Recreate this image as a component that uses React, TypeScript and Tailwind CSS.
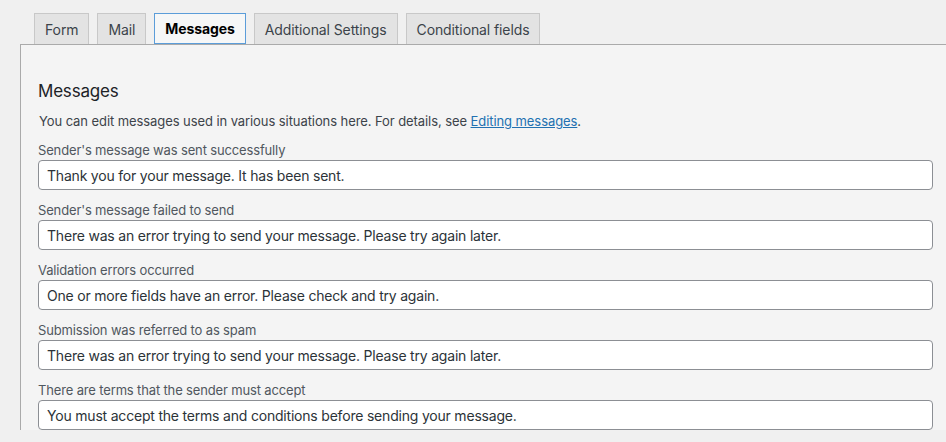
import React from "react";

const tabs = ["Form", "Mail", "Messages", "Additional Settings", "Conditional fields"];

const fields = [
  ["Sender's message was sent successfully", "Thank you for your message. It has been sent."],
  ["Sender's message failed to send", "There was an error trying to send your message. Please try again later."],
  ["Validation errors occurred", "One or more fields have an error. Please check and try again."],
  ["Submission was referred to as spam", "There was an error trying to send your message. Please try again later."],
  ["There are terms that the sender must accept", "You must accept the terms and conditions before sending your message."],
];

export default function App() {
  return (
    <div className="relative h-[442px] w-[946px] overflow-hidden bg-[#f0f0f0] font-['Inter','Liberation_Sans',sans-serif]">
      <div className="flex gap-[8px] pl-[34px] pt-[13px]">
        {tabs.map((t) =>
          t === "Messages" ? (
            <div
              key={t}
              className="flex h-[31px] items-center border border-[#5b9dd9] bg-[#f6f7f7] px-[10px] text-[14px] font-bold tracking-[-0.1px] text-black"
            >
              {t}
            </div>
          ) : (
            <div
              key={t}
              className="flex h-[31px] items-center border border-b-0 border-[#c8c8c8] bg-[#e3e3e3] px-[10px] text-[14px] tracking-[-0.1px] text-[#3c434a]"
            >
              {t}
            </div>
          )
        )}
      </div>
      <div className="ml-[20px] w-[960px] border-l border-t border-[#aaaaaa] bg-[#f4f4f4] pl-[17px] pt-[34px]">
        <h2 className="text-[17px] leading-[24px] tracking-[-0.2px] text-[#1d2327]">Messages</h2>
        <p className="mt-[9px] pl-[1px] text-[13px] leading-[18px] tracking-[-0.08px] text-[#3c434a]">
          You can edit messages used in various situations here. For details, see{" "}
          <a className="text-[#2271b1] underline">Editing messages</a>.
        </p>
        <div className="mt-[11px] flex flex-col gap-[11px]">
          {fields.map(([label, value], i) => (
            <div key={i} className="flex flex-col gap-[1px]">
              <label className="text-[13px] leading-[18px] tracking-[-0.15px] text-[#50575e]">{label}</label>
              <input
                type="text"
                readOnly
                value={value}
                className="h-[30px] w-[895px] rounded-[4px] border border-[#8c8f94] bg-white px-[8px] text-[14px] tracking-[-0.2px] text-[#2c3338] outline-none"
              />
            </div>
          ))}
        </div>
      </div>
    </div>
  );
}
